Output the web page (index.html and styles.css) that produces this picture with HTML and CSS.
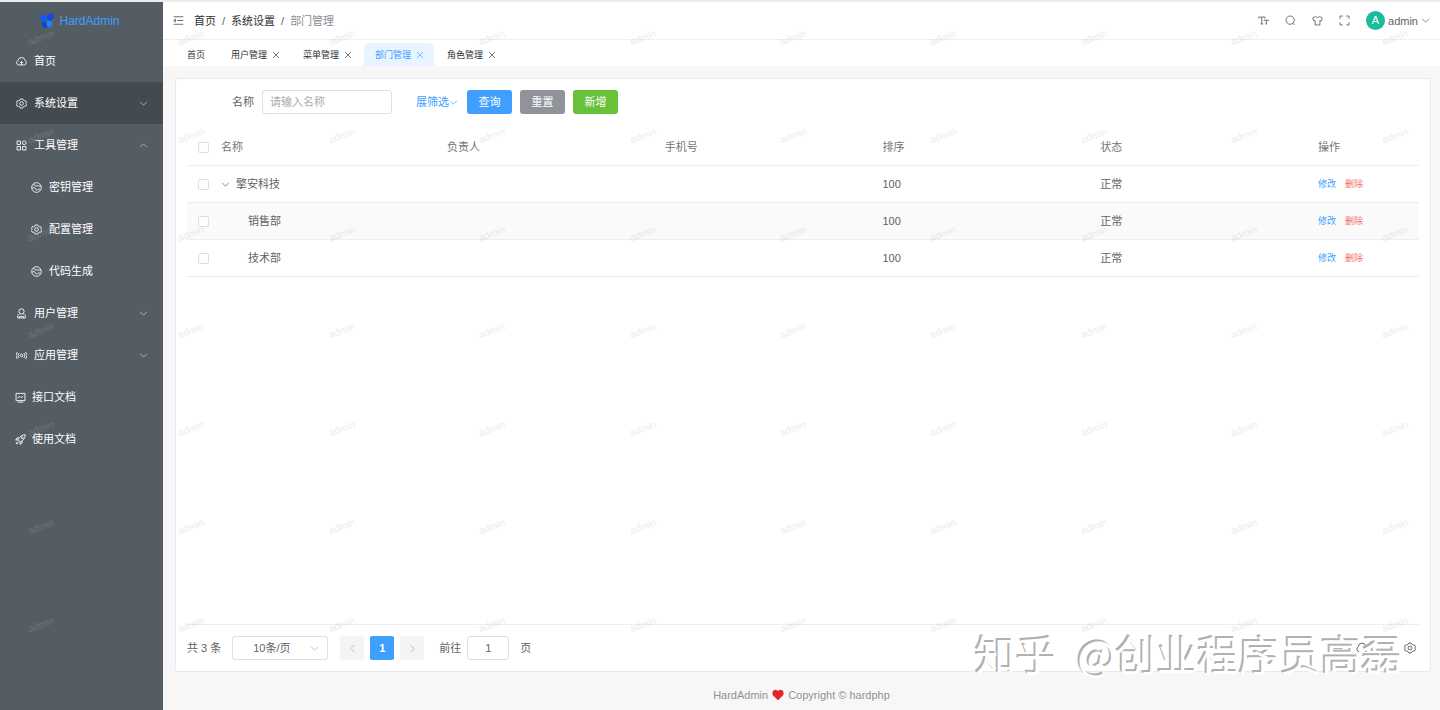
FILE: index.html
```html
<!DOCTYPE html>
<html lang="zh-CN">
<head>
<meta charset="utf-8">
<title>HardAdmin</title>
<link rel="stylesheet" href="styles.css">
</head>
<body>
<svg class="defs" aria-hidden="true">
  <symbol id="down" viewBox="0 0 16 16"><path d="M2 5l6 6 6-6"/></symbol>
  <symbol id="up" viewBox="0 0 16 16"><path d="M2 11l6-6 6 6"/></symbol>
  <symbol id="left" viewBox="0 0 16 16"><path d="M11 2L5 8l6 6"/></symbol>
  <symbol id="right" viewBox="0 0 16 16"><path d="M5 2l6 6-6 6"/></symbol>
  <symbol id="close" viewBox="0 0 16 16"><path d="M2 2l12 12M14 2L2 14"/></symbol>
  <symbol id="gear" viewBox="0 0 16 16"><path d="M6.3 1.4h3.4l.8 1.7 1.9 1 1.8-.1 1.1 2.4-1 1.6 1 1.6-1.1 2.4-1.8-.1-1.9 1-.8 1.7H6.3l-.8-1.7-1.9-1-1.8.1L.7 9.600l1-1.600-1-1.600L1.800 4l1.800.1 1.900-1z"/><circle cx="8" cy="8" r="2.600"/></symbol>
  <symbol id="ball" viewBox="0 0 16 16"><circle cx="8" cy="8" r="7"/><path d="M4 3c1 3 3 3 5 2.500S12 7 14.500 6M1.500 9C4 7.500 6 8 6.500 10s2 2 3 1 3-1 4 0"/></symbol>
</svg>

<div class="app">
  <aside class="sidebar">
    <a class="logo" href="#">
      <svg viewBox="0 0 16 16" width="16" height="16"><path fill="#0b5cff" d="M1 3l5-1.500 2 3L7 8 3 8.500 1.500 6z"/><path fill="#1648e8" d="M9 1l5-.5 1 4-3 3-3.500-.5L8 4z"/><path fill="#1f86ff" d="M8 8l5 .5.500 4-3.500 2-3-2z"/><path fill="#0a45d8" d="M3 9.500l4-.5 1.500 5L5 15l-2-2z"/></svg>
      <span>HardAdmin</span>
    </a>
    <nav class="menu">
      <a class="item" href="#"><svg class="ico" viewBox="0 0 16 16"><path d="M3.500 13A3.500 3.500 0 0 1 2.800 6.500a5.300 5.300 0 0 1 10.400 0A3.500 3.500 0 0 1 12.500 13zM8 13V8M5.800 10L8 7.800l2.200 2.200"/></svg><span>首页</span></a>
      <a class="item active" href="#"><svg class="ico"><use href="#gear"/></svg><span>系统设置</span><svg class="arrow"><use href="#down"/></svg></a>
      <a class="item" href="#"><svg class="ico" viewBox="0 0 16 16"><path d="M1.500 1.500h5v5h-5zM1.500 9.500h5v5h-5zM9.500 9.500h5v5h-5z"/><circle cx="12" cy="4" r="2.700"/></svg><span>工具管理</span><svg class="arrow"><use href="#up"/></svg></a>
      <a class="item sub" href="#"><svg class="ico"><use href="#ball"/></svg><span>密钥管理</span></a>
      <a class="item sub" href="#"><svg class="ico"><use href="#gear"/></svg><span>配置管理</span></a>
      <a class="item sub" href="#"><svg class="ico"><use href="#ball"/></svg><span>代码生成</span></a>
      <a class="item" href="#"><svg class="ico" viewBox="0 0 16 16"><circle cx="8" cy="5" r="3.800"/><path d="M5.500 8L2.500 11v3.500h11V11l-3-3M5 14.500v-2h6v2"/></svg><span>用户管理</span><svg class="arrow"><use href="#down"/></svg></a>
      <a class="item" href="#"><svg class="ico" viewBox="0 0 16 16"><circle cx="8" cy="8" r="1.900"/><path d="M4.500 4.500a5 5 0 0 0 0 7M11.500 4.500a5 5 0 0 1 0 7M1.800 3a8 8 0 0 0 0 10M14.200 3a8 8 0 0 1 0 10"/></svg><span>应用管理</span><svg class="arrow"><use href="#down"/></svg></a>
      <a class="item leaf" href="#"><svg class="ico" viewBox="0 0 16 16"><path d="M1.500 2h13v10.500h-13zM4 9l2.500-3L9 8.500 12 6M4 14.700h8"/></svg><span>接口文档</span></a>
      <a class="item leaf" href="#"><svg class="ico" viewBox="0 0 16 16"><path d="M15 1C10 1 7 3.500 4.500 8.500l3 3C12.500 9 15 6 15 1zM6 5.500L2.500 6 1 9l3.500-.5M10.500 10L10 13.500 7 15l.5-3.500M4 11l-2.500 3.500L5 12.500"/><circle cx="10.500" cy="5.500" r="1.300"/></svg><span>使用文档</span></a>
    </nav>
  </aside>

  <div class="page">
    <header class="topbar">
      <button class="plain" aria-label="折叠菜单"><svg class="ico" viewBox="0 0 16 16"><path d="M1 2.500h14M6 8h9M1 13.500h14M3.500 6L1 8l2.500 2z"/></svg></button>
      <nav class="crumbs"><a href="#">首页</a><i>/</i><a href="#">系统设置</a><i>/</i><span>部门管理</span></nav>
      <div class="tools">
        <button class="plain" aria-label="字号"><svg class="ico" viewBox="0 0 16 16"><path d="M1 5V3h9v2M5.500 3v10M3.500 13h4M9 8.500V7.500h6v1.500M12 7.500V13M10.800 13h2.400"/></svg></button>
        <button class="plain" aria-label="搜索"><svg class="ico" viewBox="0 0 16 16"><circle cx="7.500" cy="7.500" r="6"/><path d="M11.500 12l2.500 2.500"/></svg></button>
        <button class="plain" aria-label="主题"><svg class="ico" viewBox="0 0 16 16"><path d="M5 2L1 4.500l1.500 4L4.500 8v6.500h7V8l2 .5 1.500-4L11 2c-1 2-5 2-6 0z"/></svg></button>
        <button class="plain" aria-label="全屏"><svg class="ico" viewBox="0 0 16 16"><path d="M1.500 5.500v-4h4M10.500 1.500h4v4M14.500 10.500v4h-4M5.500 14.500h-4v-4"/></svg></button>
        <button class="plain user"><span class="avatar">A</span><span>admin</span><svg class="arrow"><use href="#down"/></svg></button>
      </div>
    </header>

    <nav class="tabs">
      <a class="tab home" href="#">首页</a>
      <a class="tab" href="#">用户管理<svg><use href="#close"/></svg></a>
      <a class="tab" href="#">菜单管理<svg><use href="#close"/></svg></a>
      <a class="tab current" href="#">部门管理<svg><use href="#close"/></svg></a>
      <a class="tab" href="#">角色管理<svg><use href="#close"/></svg></a>
    </nav>

    <main class="content">
      <section class="card">
        <form class="search">
          <label for="name">名称</label>
          <input id="name" type="text" placeholder="请输入名称">
          <a class="more" href="#">展筛选<svg><use href="#down"/></svg></a>
          <button class="btn primary" type="button">查询</button>
          <button class="btn info" type="button">重置</button>
          <button class="btn success" type="button">新增</button>
        </form>

        <table class="grid">
          <colgroup><col class="c-check"><col class="c-name"><col><col><col><col><col class="c-act"></colgroup>
          <thead>
            <tr><th><input type="checkbox" aria-label="全选"></th><th>名称</th><th>负责人</th><th>手机号</th><th>排序</th><th>状态</th><th>操作</th></tr>
          </thead>
          <tbody>
            <tr><td><input type="checkbox" aria-label="擎安科技"></td><td><div class="node"><svg><use href="#down"/></svg>擎安科技</div></td><td></td><td></td><td>100</td><td>正常</td><td><div class="ops"><a href="#">修改</a><a class="del" href="#">删除</a></div></td></tr>
            <tr class="hover"><td><input type="checkbox" aria-label="销售部"></td><td><div class="child">销售部</div></td><td></td><td></td><td>100</td><td>正常</td><td><div class="ops"><a href="#">修改</a><a class="del" href="#">删除</a></div></td></tr>
            <tr><td><input type="checkbox" aria-label="技术部"></td><td><div class="child">技术部</div></td><td></td><td></td><td>100</td><td>正常</td><td><div class="ops"><a href="#">修改</a><a class="del" href="#">删除</a></div></td></tr>
          </tbody>
        </table>

        <div class="pager">
          <span class="total">共 3 条</span>
          <div class="size"><select aria-label="每页条数"><option>10条/页</option></select><svg><use href="#down"/></svg></div>
          <div class="nums">
            <button class="num" disabled aria-label="上一页"><svg><use href="#left"/></svg></button>
            <button class="num on">1</button>
            <button class="num" disabled aria-label="下一页"><svg><use href="#right"/></svg></button>
          </div>
          <div class="jump"><label for="goto">前往</label><input id="goto" type="text" value="1"><span>页</span></div>
          <div class="extras">
            <button class="plain" aria-label="刷新"><svg class="ico" viewBox="0 0 16 16"><path d="M2 4h12M2 8h12M3 12c2 2.500 8 2.500 10 0"/></svg></button>
            <button class="plain" aria-label="导出"><svg class="ico" viewBox="0 0 16 16"><path d="M4 13A3.500 3.500 0 0 1 3 6.500a5 5 0 0 1 10 0A3.500 3.500 0 0 1 12 13"/></svg></button>
            <button class="plain" aria-label="更多"><svg class="ico" viewBox="0 0 16 16"><path d="M1.500 10l1-1M7.500 12l1-1M13.500 5l1-1M13.500 12l1-1"/></svg></button>
            <button class="plain" aria-label="设置"><svg class="ico"><use href="#gear"/></svg></button>
          </div>
        </div>
      </section>
    </main>

    <footer class="foot"><span>HardAdmin</span><svg viewBox="0 0 16 16" width="12" height="12"><path fill="#e0262b" d="M8 15L1.500 8.500C-1 5 1.500 1 4.500 1 6.300 1 7.500 2 8 3c.5-1 1.700-2 3.500-2 3 0 5.500 4 3 7.500z"/></svg><span>Copyright © hardphp</span></footer>
  </div>

  <svg class="watermark" id="watermark" aria-hidden="true"></svg>
  <div class="signature"><span>知乎</span><span>@创业程序员高磊</span></div>
</div>
<script src="main.js"></script>
</body>
</html>
```
FILE: main.js
```js
// Repeats the signed-in user's name across the window.
const layer = document.getElementById('watermark');
const columns = 10;
const rows = 7;
for (let r = 0; r < rows; r++) {
  for (let c = 0; c < columns; c++) {
    const x = Math.round(41 + c * 150.4);
    const y = Math.round(38 + r * 97.8);
    const t = document.createElementNS('http://www.w3.org/2000/svg', 'text');
    t.setAttribute('transform', `translate(${x} ${y}) rotate(-20)`);
    t.setAttribute('text-anchor', 'middle');
    t.setAttribute('dy', '3');
    t.textContent = 'admin';
    layer.append(t);
  }
}
```
FILE: styles.css
```css
* { box-sizing: border-box; }

body {
  margin: 0;
  font: 11px/16px "Liberation Sans", "Noto Sans CJK SC", sans-serif;
  color: #606266;
  background: #f7f7f7;
}

a { color: inherit; text-decoration: none; }
button, input, select { font: inherit; color: inherit; }
svg { fill: none; stroke: currentColor; stroke-width: 1.3; flex: none; }
svg path[fill] { stroke: none; }
.defs { display: none; }
.ico { width: 11px; height: 11px; display: block; }
.plain { border: 0; padding: 0; background: none; display: flex; align-items: center; }

.app {
  position: relative;
  display: flex;
  min-height: 100vh;
  border-top: 2px solid #ececec;
  overflow: hidden;
}

.sidebar { width: 163px; flex: none; background: #545c64; color: #fff; }
.logo {
  display: flex;
  align-items: center;
  justify-content: center;
  gap: 4px;
  height: 38px;
  padding-right: 4px;
  font-size: 12px;
  color: #409eff;
}
.item {
  display: flex;
  align-items: center;
  gap: 7px;
  height: 42px;
  padding: 0 15px 0 16px;
}
.item.active { background: #434a50; }
.item .arrow { width: 9px; height: 9px; margin-left: auto; color: #c8cbce; }
.item.sub { padding-left: 31px; }
.item.leaf { padding-left: 15px; gap: 6px; }

.page { flex: 1; min-width: 0; display: flex; flex-direction: column; }

.topbar {
  display: flex;
  align-items: center;
  gap: 10px;
  height: 38px;
  padding: 0 10px;
  background: #fff;
  border-bottom: 1px solid #f0f0f0;
}
.crumbs { display: flex; gap: 6px; color: #303133; }
.crumbs i { font-style: normal; color: #606266; }
.crumbs span { color: #8a8d93; }
.tools { margin-left: auto; display: flex; align-items: center; gap: 16px; }
.user { gap: 3px; }
.user .arrow { width: 9px; height: 9px; }
.avatar {
  width: 19px;
  height: 19px;
  line-height: 19px;
  border-radius: 50%;
  background: #1abc9c;
  color: #fff;
  text-align: center;
}

.tabs {
  display: flex;
  align-items: flex-end;
  gap: 2px;
  height: 26px;
  padding-left: 13px;
  background: #fff;
  font-size: 9px;
  color: #303133;
}
.tab { position: relative; display: flex; align-items: center; gap: 5px; height: 23px; padding: 0 10px 0 11px; }
.tab.home { margin-right: 3px; }
.tab svg { width: 8px; height: 8px; }
.tab.current { background: #e8f4ff; color: #409eff; border-radius: 6px 6px 0 0; }
.tab.current::before, .tab.current::after {
  content: "";
  position: absolute;
  bottom: 0;
  width: 4px;
  height: 4px;
}
.tab.current::before { right: 100%; background: radial-gradient(circle at 0 0, transparent 4px, #e8f4ff 4px); }
.tab.current::after { left: 100%; background: radial-gradient(circle at 100% 0, transparent 4px, #e8f4ff 4px); }

.content { flex: 1; display: flex; padding: 12px 9px 0 12px; }
.card {
  flex: 1;
  min-width: 0;
  display: flex;
  flex-direction: column;
  padding: 11px 11px 0;
  background: #fff;
  border: 1px solid #e6e9ee;
  border-radius: 3px;
}

.search { display: flex; align-items: center; height: 24px; padding-left: 45px; }
.search input {
  width: 130px;
  height: 24px;
  margin: 0 24px 0 8px;
  padding: 0 7px;
  border: 1px solid #dcdfe6;
  border-radius: 3px;
}
.search input::placeholder { color: #a8abb2; }
.more { display: flex; align-items: center; margin-right: 9px; color: #409eff; }
.more svg { width: 9px; height: 9px; }
.btn {
  width: 45px;
  height: 24px;
  padding: 0;
  margin-right: 8px;
  border: 0;
  border-radius: 3px;
  color: #fff;
}
.primary { background: #409eff; }
.info { background: #909399; }
.success { background: #67c23a; }

.grid { width: 100%; margin-top: 15px; table-layout: fixed; border-collapse: separate; border-spacing: 0; }
.c-check { width: 26px; }
.c-name { width: 226px; }
.c-act { width: 109px; }
.grid th, .grid td {
  height: 37px;
  padding: 0 8px;
  border-bottom: 1px solid #ebeef5;
  text-align: left;
  font-weight: 400;
}
.grid th { color: #73767a; }
.grid th:first-child, .grid td:first-child { padding: 0 0 0 11px; }
.hover td { background: #fafafa; }
.grid input {
  appearance: none;
  display: block;
  width: 11px;
  height: 11px;
  margin: 0;
  border: 1px solid #dcdfe6;
  border-radius: 2px;
  background: #fff;
}
.node { display: flex; align-items: center; gap: 6px; }
.node svg { width: 9px; height: 9px; }
.child { padding-left: 27px; }
.ops { display: flex; gap: 9px; font-size: 9px; color: #409eff; }
.del { color: #f56c6c; }

.pager {
  display: flex;
  align-items: center;
  height: 47px;
  margin-top: auto;
  border-top: 1px solid #ebeef5;
}
.total { margin-right: 11px; }
.size { position: relative; margin-right: 12px; }
.size select {
  appearance: none;
  display: block;
  width: 96px;
  height: 24px;
  padding: 0 20px;
  border: 1px solid #dcdfe6;
  border-radius: 3px;
  background: #fff;
}
.size svg { position: absolute; right: 9px; top: 8px; width: 9px; height: 9px; color: #a8abb2; pointer-events: none; }
.nums { display: flex; gap: 6px; margin-right: 15px; }
.num {
  display: flex;
  align-items: center;
  justify-content: center;
  width: 24px;
  height: 24px;
  padding: 0;
  border: 0;
  border-radius: 2px;
  background: #f4f4f5;
  color: #a8abb2;
}
.num svg { width: 9px; height: 9px; }
.num.on { background: #409eff; color: #fff; font-weight: 700; }
.jump { display: flex; align-items: center; }
.jump input {
  width: 42px;
  height: 24px;
  margin: 0 11px 0 6px;
  padding: 0;
  border: 1px solid #dcdfe6;
  border-radius: 3px;
  text-align: center;
}
.extras { display: flex; gap: 12px; margin-left: auto; padding-right: 3px; }
.extras .ico { width: 12px; height: 12px; }

.foot {
  display: flex;
  align-items: center;
  justify-content: center;
  gap: 4px;
  height: 38px;
  padding-top: 8px;
  color: #8f9297;
}

.watermark {
  position: absolute;
  inset: -2px 0 0;
  width: 100%;
  height: 100%;
  pointer-events: none;
}
.watermark text { font-size: 10px; fill: #b4b4b4; fill-opacity: 0.3; stroke: none; }

.signature {
  position: absolute;
  right: 37px;
  bottom: 27px;
  display: flex;
  gap: 20px;
  font: 41px/60px "Noto Sans CJK SC", sans-serif;
  color: #fff;
  text-shadow: -2px -2px 0 #b0b0b0;
  white-space: nowrap;
  pointer-events: none;
}
```
